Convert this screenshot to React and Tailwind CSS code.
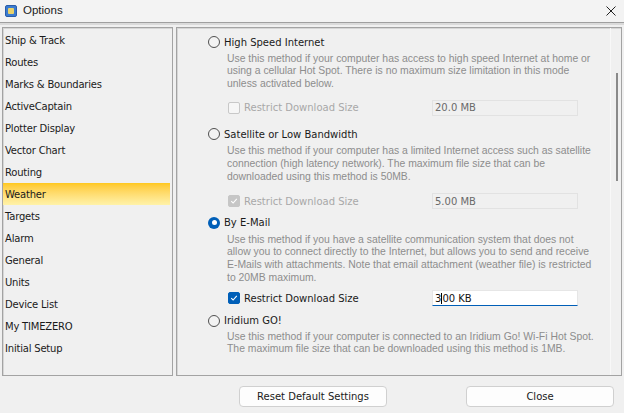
import React from 'react';

const menu = [
  'Ship & Track',
  'Routes',
  'Marks & Boundaries',
  'ActiveCaptain',
  'Plotter Display',
  'Vector Chart',
  'Routing',
  'Weather',
  'Targets',
  'Alarm',
  'General',
  'Units',
  'Device List',
  'My TIMEZERO',
  'Initial Setup',
];

const ui = "font-['DejaVu_Sans',sans-serif]";
const seg = "font-['Liberation_Sans',Arial,sans-serif]";

function Radio({ checked }) {
  if (checked) {
    return (
      <span className="w-[12px] h-[12px] rounded-full bg-[#005fb8] flex items-center justify-center shrink-0">
        <span className="w-[5px] h-[5px] rounded-full bg-white" />
      </span>
    );
  }
  return <span className="w-[12px] h-[12px] rounded-full border border-[#505050] bg-[#f3f3f3] shrink-0" />;
}

function Check({ checked, disabled }) {
  const box = checked
    ? disabled
      ? 'bg-[#c6c6c6] border-[#c6c6c6]'
      : 'bg-[#005fb8] border-[#005fb8]'
    : 'bg-[#f6f6f6] border-[#c8c8c8]';
  return (
    <span className={`w-[12px] h-[12px] rounded-[2px] border flex items-center justify-center shrink-0 ${box}`}>
      {checked && (
        <svg width="8" height="8" viewBox="0 0 8 8">
          <path d="M1.2 4.2 L3.1 6 L6.8 1.8" fill="none" stroke="white" strokeWidth="1.1" />
        </svg>
      )}
    </span>
  );
}

function Method({ title, checked, lines, limit, restrict, enabled, top, descTop, limitTop }) {
  return (
    <div className={`flex flex-col ${top}`}>
      <div className="flex items-center gap-[4px] h-[18px]">
        <Radio checked={checked} />
        <span className={`${ui} text-[10px] text-[#1a1a1a]`}>{title}</span>
      </div>
      <div className={`${seg} text-[10.4px] leading-[12.7px] text-[#8d8d8d] pl-[19px] ${descTop}`}>
        {lines.map((l) => (
          <div key={l} className="whitespace-nowrap">{l}</div>
        ))}
      </div>
      {limit && (
        <div className={`flex items-center h-[20px] ${limitTop}`}>
          <div className="flex items-center gap-[4px] pl-[20px] w-[224px]">
            <Check checked={restrict} disabled={!enabled} />
            <span className={`${ui} text-[10px] ${enabled ? 'text-[#1a1a1a]' : 'text-[#a8a8a8]'}`}>
              Restrict Download Size
            </span>
          </div>
          {enabled ? (
            <div className={`${ui} text-[10px] w-[146px] h-[16px] bg-white border border-[#e6e6e6] border-b-[#005fb8] flex items-center pl-[2px] text-[#111]`}>
              3<span className="w-px h-[11px] bg-black" />00 KB
            </div>
          ) : (
            <div className={`${ui} text-[10px] w-[146px] h-[16px] bg-[#f0f0f0] border border-[#e2e2e2] flex items-center pl-[2px] text-[#6a6a6a]`}>
              {limit}
            </div>
          )}
        </div>
      )}
    </div>
  );
}

export default function App() {
  return (
    <div className="w-[624px] h-[413px] bg-[#f0f0f0] flex flex-col overflow-hidden">
      <div className="h-[22px] flex items-center pl-[5px] pr-[8px] bg-[#f3f3f3]">
        <span className="w-[12px] h-[12px] rounded-[2px] bg-[#3b7bd0] border border-[#2a5da8] flex items-center justify-center">
          <span className="w-[6px] h-[6px] bg-[#e9d26a] rounded-[1px]" />
        </span>
        <span className="ml-[6px] text-[11.5px] text-[#1a1a1a] font-['Liberation_Sans',Arial,sans-serif]">Options</span>
        <svg className="ml-auto" width="10" height="10" viewBox="0 0 10 10">
          <path d="M0.5 0.5 L9.5 9.5 M9.5 0.5 L0.5 9.5" stroke="#222" strokeWidth="1" />
        </svg>
      </div>
      <div className="h-[3px] border-t border-[#9f9f9f] bg-[#dadada]" />
      <div className="flex gap-[3px] px-[2px] pt-[2px] h-[351px]">
        <div className="w-[171px] border border-[#a3a3a3] shadow-[inset_1px_1px_0_#d6d6d6] pt-[1px] pr-[2px]">
          {menu.map((m) => (
            <div
              key={m}
              className={`${ui} h-[22px] flex items-center pl-[2px] text-[10px] tracking-[-0.2px] text-[#1a1a1a] ${
                m === 'Weather' ? 'bg-gradient-to-b from-[#ffc81a] to-[#fff2a8]' : ''
              }`}
            >
              {m}
            </div>
          ))}
        </div>
        <div className="flex-1 border border-[#a3a3a3] shadow-[inset_1px_1px_0_#d6d6d6] flex">
          <div className="flex-1 flex flex-col pl-[31px] pt-[5px]">
            <Method
              title="High Speed Internet"
              lines={[
                'Use this method if your computer has access to high speed Internet at home or',
                'using a cellular Hot Spot. There is no maximum size limitation in this mode',
                'unless activated below.',
              ]}
              limit="20.0 MB"
              restrict={false}
              top="mt-0"
              descTop="mt-[1.6px]"
              limitTop="mt-[6.8px]"
            />
            <Method
              title="Satellite or Low Bandwidth"
              lines={[
                'Use this method if your computer has a limited Internet access such as satellite',
                'connection (high latency network). The maximum file size that can be',
                'downloaded using this method is 50MB.',
              ]}
              limit="5.00 MB"
              restrict
              top="mt-[7.8px]"
              descTop="mt-[2px]"
              limitTop="mt-[7.6px]"
            />
            <Method
              title="By E-Mail"
              checked
              lines={[
                'Use this method if you have a satellite communication system that does not',
                'allow you to connect directly to the Internet, but allows you to send and receive',
                'E-Mails with attachments. Note that email attachment (weather file) is restricted',
                'to 20MB maximum.',
              ]}
              limit="300 KB"
              restrict
              enabled
              top="mt-[2.7px]"
              descTop="mt-[2px]"
              limitTop="mt-[3.5px]"
            />
            <Method
              title="Iridium GO!"
              lines={[
                'Use this method if your computer is connected to an Iridium Go! Wi-Fi Hot Spot.',
                'The maximum file size that can be downloaded using this method is 1MB.',
              ]}
              top="mt-[3.7px]"
              descTop="mt-[1px]"
            />
          </div>
          <div className="w-[11px] border-l border-[#f8f8f8] flex justify-end pr-[3px] pt-[45px]">
            <div className="w-[2px] h-[108px] bg-[#8a8a8a]" />
          </div>
        </div>
      </div>
      <div className="flex-1 flex items-start pt-[10px] pl-[239px] gap-[79px]">
        <button className={`${ui} w-[148px] h-[21px] rounded-[4px] border border-[#d0d0d0] bg-[#fdfdfd] text-[10px] text-[#1a1a1a]`}>
          Reset Default Settings
        </button>
        <button className={`${ui} w-[148px] h-[21px] rounded-[4px] border border-[#d0d0d0] bg-[#fdfdfd] text-[10px] text-[#1a1a1a]`}>
          Close
        </button>
      </div>
    </div>
  );
}
